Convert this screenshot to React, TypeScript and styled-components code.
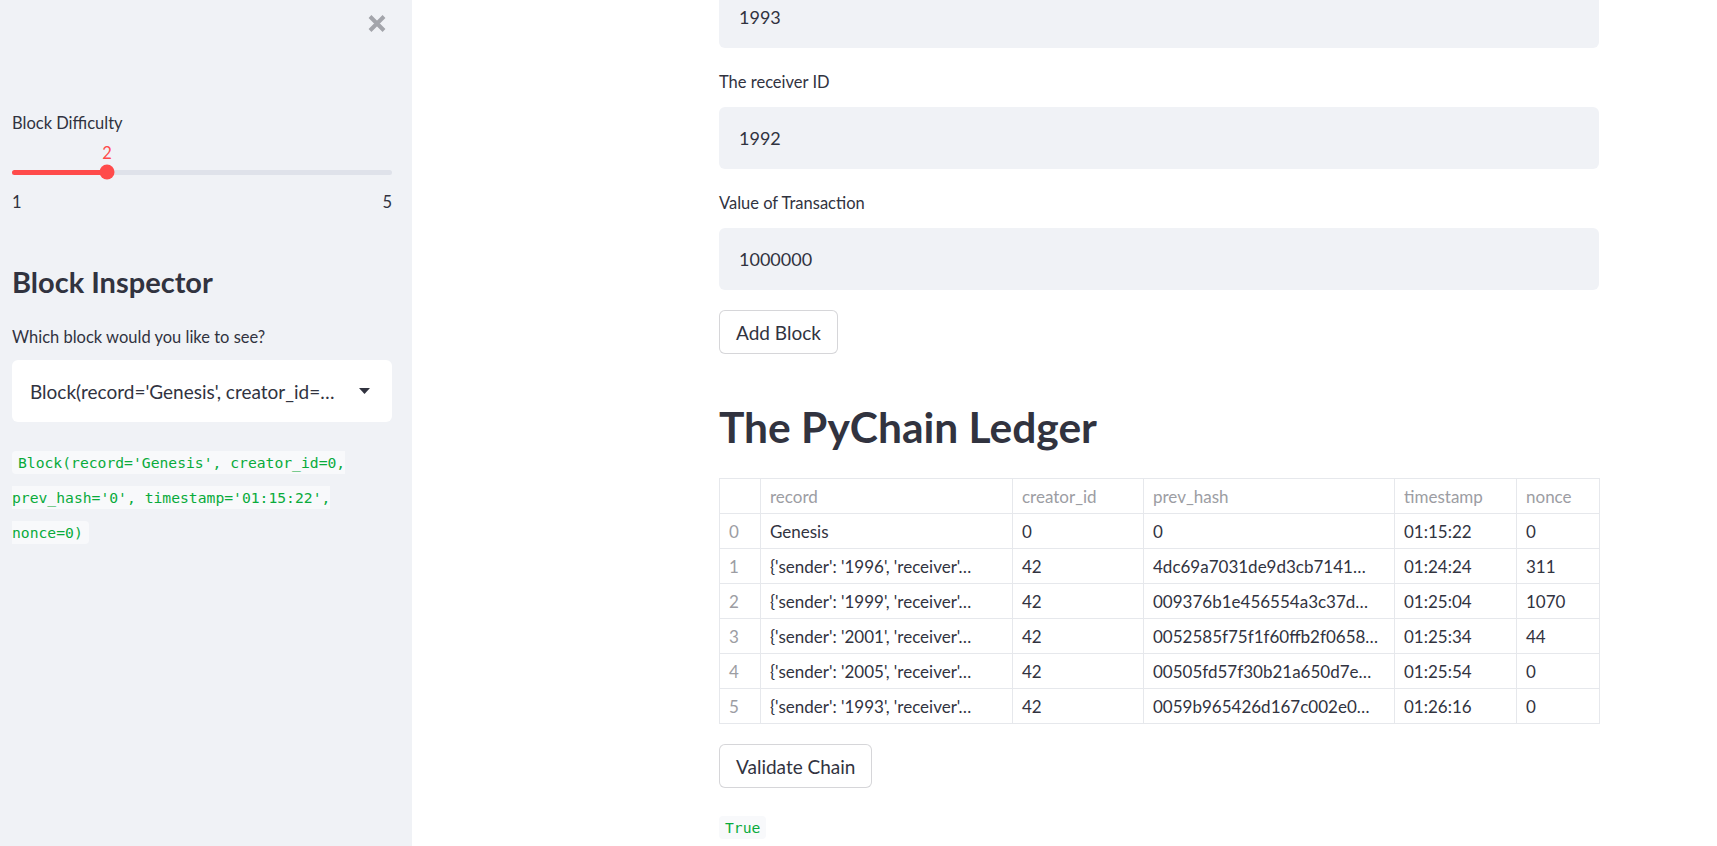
import React from 'react';
import styled, { createGlobalStyle } from 'styled-components';

const GlobalStyle = createGlobalStyle`
  html, body { margin: 0; padding: 0; height: 100%; overflow: hidden; background: #ffffff; }
  body { font-family: Lato, "Noto Sans", sans-serif; color: #31333f; }
  #root { height: 100%; }
  * { box-sizing: border-box; }
`;

const Shell = styled.div`
  display: flex;
  height: 846px;
  overflow: hidden;
`;

const Sidebar = styled.aside`
  width: 412px;
  flex-shrink: 0;
  background: #f0f2f6;
  padding: 0 20px 0 12px;
  display: flex;
  flex-direction: column;
`;

const CloseRow = styled.div`
  height: 46px;
  display: flex;
  align-items: center;
  justify-content: flex-end;
  padding-right: 6px;
`;

const CloseButton = styled.button`
  border: none;
  background: transparent;
  padding: 0;
  width: 18px;
  height: 18px;
  display: flex;
  align-items: center;
  justify-content: center;
  cursor: pointer;
`;

const WidgetLabel = styled.div<{ $top?: number }>`
  height: 28px;
  line-height: 28px;
  font-size: 16.5px;
  color: #31333f;
  margin-top: ${(p) => p.$top ?? 0}px;
`;

const SliderWrap = styled.div`
  display: flex;
  flex-direction: column;
`;

const ValueRow = styled.div`
  position: relative;
  height: 20px;
  margin-top: 6px;
`;

const ThumbValue = styled.span`
  position: absolute;
  top: 0;
  transform: translateX(-50%);
  line-height: 20px;
  font-size: 16.5px;
  color: #ff4b4b;
`;

const TrackArea = styled.div`
  position: relative;
  height: 18px;
  display: flex;
  align-items: center;
`;

const Track = styled.div`
  width: 100%;
  height: 5px;
  border-radius: 3px;
  background: #dfe2ea;
  overflow: hidden;
  display: flex;
`;

const TrackFill = styled.div`
  height: 100%;
  background: #ff4b4b;
`;

const Thumb = styled.div`
  position: absolute;
  top: 50%;
  width: 15px;
  height: 15px;
  border-radius: 50%;
  background: #ff4b4b;
  transform: translate(-50%, -50%);
`;

const TickRow = styled.div`
  height: 24px;
  margin-top: 9px;
  line-height: 24px;
  font-size: 16.5px;
  display: flex;
  justify-content: space-between;
  color: #31333f;
`;

const SideHeading = styled.h2`
  margin: 48px 0 0;
  height: 40px;
  line-height: 40px;
  font-size: 29px;
  font-weight: 700;
  color: #31333f;
`;

const SelectBox = styled.div`
  margin-top: 9px;
  height: 62px;
  background: #ffffff;
  border-radius: 6px;
  display: flex;
  align-items: center;
  padding: 0 22px 0 18px;
  gap: 14px;
`;

const SelectText = styled.div`
  flex: 1;
  min-width: 0;
  white-space: nowrap;
  font-size: 19px;
  color: #31333f;
`;

const CodePara = styled.p`
  margin: 22px 0 0;
  font-size: 20px;
  line-height: 32px;
`;

const ResultLine = styled.div`
  margin-top: 5px;
  font-size: 20px;
  line-height: 24px;
`;

const InlineCode = styled.code`
  font-family: "DejaVu Sans Mono", "Liberation Mono", monospace;
  font-size: 14.7px;
  color: #09ab3b;
  background: #f8f9fb;
  padding: 3px 6px;
  border-radius: 4px;
  white-space: normal;
  overflow-wrap: break-word;
`;

const Main = styled.main`
  flex: 1;
  padding-left: 307px;
`;

const Content = styled.div`
  width: 880px;
  margin-top: -14px;
  display: flex;
  flex-direction: column;
  align-items: flex-start;
  gap: 20px;
`;

const Field = styled.div`
  width: 100%;
  display: flex;
  flex-direction: column;
`;

const TextInput = styled.div<{ $labelled?: boolean }>`
  width: 100%;
  height: 62px;
  margin-top: ${(p) => (p.$labelled ? 11 : 0)}px;
  background: #f0f2f6;
  border-radius: 6px;
  display: flex;
  align-items: center;
  padding-left: 20px;
  font-size: 18px;
  color: #31333f;
`;

const Button = styled.button`
  height: 44px;
  padding: 0 16px;
  background: #ffffff;
  border: 1px solid rgba(49, 51, 63, 0.2);
  border-radius: 6px;
  font-family: Lato, "Noto Sans", sans-serif;
  font-size: 19px;
  color: #31333f;
  cursor: pointer;
`;

const Title = styled.h1`
  margin: 0;
  padding: 23px 0 1px;
  line-height: 60px;
  font-size: 42.5px;
  font-weight: 700;
  color: #31333f;
`;

const Table = styled.table`
  width: 880px;
  table-layout: fixed;
  border-collapse: collapse;
  font-size: 17px;
`;

const Th = styled.th`
  height: 35px;
  padding: 0 9px;
  text-align: left;
  font-weight: 400;
  color: #9c9da3;
  border: 1px solid #e6e8ec;
  white-space: nowrap;
`;

const Td = styled.td<{ $index?: boolean }>`
  height: 35px;
  padding: 0 9px;
  color: ${(p) => (p.$index ? '#9c9da3' : '#31333f')};
  border: 1px solid #e6e8ec;
  white-space: nowrap;
`;

const CloseIcon = () => (
  <svg width="18" height="17" viewBox="0 0 18 17">
    <path d="M2 1.5 L16 15.5 M16 1.5 L2 15.5" stroke="#a3a5ab" strokeWidth="4" strokeLinecap="butt" />
  </svg>
);

const Caret = () => (
  <svg width="11" height="6" viewBox="0 0 11 6">
    <path d="M0 0 L11 0 L5.5 6 Z" fill="#31333f" />
  </svg>
);

const columns = [
  { key: 'idx', label: '', width: 41 },
  { key: 'record', label: 'record', width: 252 },
  { key: 'creator', label: 'creator_id', width: 131 },
  { key: 'prev', label: 'prev_hash', width: 251 },
  { key: 'ts', label: 'timestamp', width: 122 },
  { key: 'nonce', label: 'nonce', width: 83 },
];

const rows = [
  ['0', 'Genesis', '0', '0', '01:15:22', '0'],
  ['1', "{'sender': '1996', 'receiver'…", '42', '4dc69a7031de9d3cb7141…', '01:24:24', '311'],
  ['2', "{'sender': '1999', 'receiver'…", '42', '009376b1e456554a3c37d…', '01:25:04', '1070'],
  ['3', "{'sender': '2001', 'receiver'…", '42', '0052585f75f1f60ffb2f0658…', '01:25:34', '44'],
  ['4', "{'sender': '2005', 'receiver'…", '42', '00505fd57f30b21a650d7e…', '01:25:54', '0'],
  ['5', "{'sender': '1993', 'receiver'…", '42', '0059b965426d167c002e0…', '01:26:16', '0'],
];

export default function App() {
  const sliderPct = ((2 - 1) / (5 - 1)) * 100;
  return (
    <>
      <GlobalStyle />
      <Shell>
        <Sidebar>
          <CloseRow>
            <CloseButton aria-label="Close sidebar">
              <CloseIcon />
            </CloseButton>
          </CloseRow>
          <WidgetLabel $top={63}>Block Difficulty</WidgetLabel>
          <SliderWrap>
            <ValueRow>
              <ThumbValue style={{ left: `${sliderPct}%` }}>2</ThumbValue>
            </ValueRow>
            <TrackArea>
              <Track>
                <TrackFill style={{ width: `${sliderPct}%` }} />
              </Track>
              <Thumb style={{ left: `${sliderPct}%` }} />
            </TrackArea>
            <TickRow>
              <span>1</span>
              <span>5</span>
            </TickRow>
          </SliderWrap>
          <SideHeading>Block Inspector</SideHeading>
          <WidgetLabel $top={21}>Which block would you like to see?</WidgetLabel>
          <SelectBox>
            <SelectText>Block(record='Genesis', creator_id=…</SelectText>
            <Caret />
          </SelectBox>
          <CodePara>
            <InlineCode>Block(record='Genesis', creator_id=0, prev_hash='0', timestamp='01:15:22', nonce=0)</InlineCode>
          </CodePara>
        </Sidebar>
        <Main>
          <Content>
            <TextInput>1993</TextInput>
            <Field>
              <WidgetLabel>The receiver ID</WidgetLabel>
              <TextInput $labelled>1992</TextInput>
            </Field>
            <Field>
              <WidgetLabel>Value of Transaction</WidgetLabel>
              <TextInput $labelled>1000000</TextInput>
            </Field>
            <Button>Add Block</Button>
            <Title>The PyChain Ledger</Title>
            <Table>
              <colgroup>
                {columns.map((c) => (
                  <col key={c.key} style={{ width: c.width }} />
                ))}
              </colgroup>
              <thead>
                <tr>
                  {columns.map((c) => (
                    <Th key={c.key}>{c.label}</Th>
                  ))}
                </tr>
              </thead>
              <tbody>
                {rows.map((r) => (
                  <tr key={r[0]}>
                    {r.map((v, i) => (
                      <Td key={i} $index={i === 0}>{v}</Td>
                    ))}
                  </tr>
                ))}
              </tbody>
            </Table>
            <Button>Validate Chain</Button>
            <ResultLine>
              <InlineCode>True</InlineCode>
            </ResultLine>
          </Content>
        </Main>
      </Shell>
    </>
  );
}
